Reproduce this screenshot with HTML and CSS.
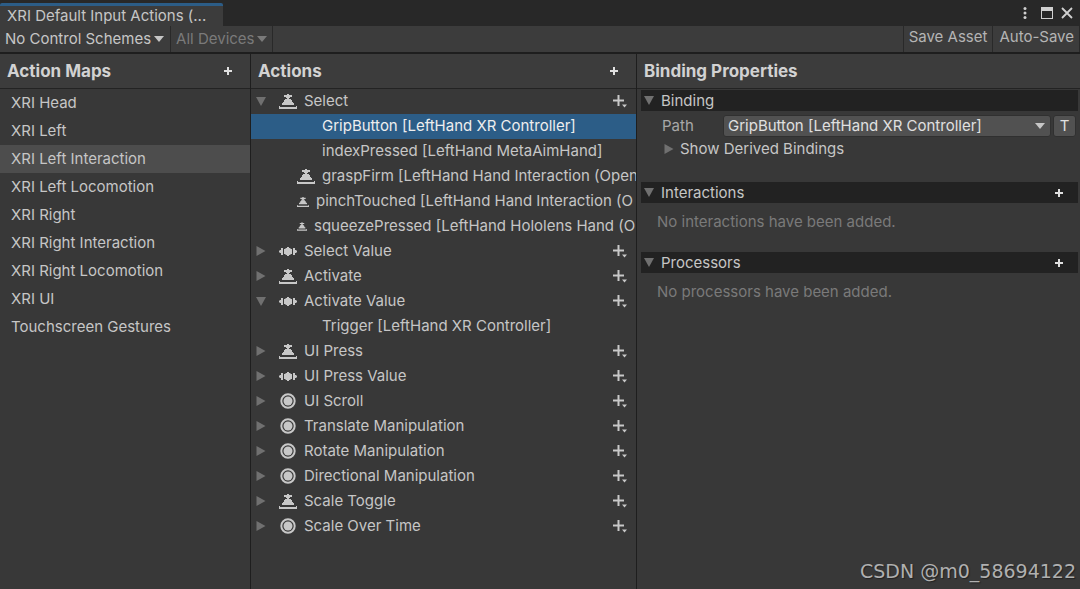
FILE: index.html
```html
<!DOCTYPE html>
<html lang="en">
<head>
<meta charset="utf-8">
<title>XRI Default Input Actions</title>
<link rel="stylesheet" href="styles.css">
</head>
<body>
<svg class="defs" aria-hidden="true">
  <symbol id="down" viewBox="0 0 10 9"><path d="M0 0h10L5 9z"/></symbol>
  <symbol id="right" viewBox="0 0 10 10"><path d="M0.500 0l9 5-9 5z"/></symbol>
  <symbol id="caret" viewBox="0 0 10 6"><path d="M0 0h10L5 6z"/></symbol>
  <symbol id="press" viewBox="0 0 18 15"><path d="M0 12h1v1h16v-1h1v3H0zM8 0h2v1h3v2h-2v1h-1v1h2v1h1v2h1v1h1v2H3V9h1V8h1V6h1V5h2V4H7V3H5V1h3z"/></symbol>
  <symbol id="axis" viewBox="0 0 18 9"><path d="M0 4l1-1h1V1h2v7H2V6H1L0 5zM18 4l-1-1h-1V1h-2v7h2V6h1l1-1zM7 1h1V0h2v1h1l1 1h1v5h-1l-1 1h-1v1H8V8H7L6 7H5V2h1z"/></symbol>
  <symbol id="ring" viewBox="0 0 18 18"><circle cx="9" cy="9" r="6.7" fill="none" stroke="currentColor" stroke-width="2"/><circle cx="9" cy="9" r="4.500"/></symbol>
  <symbol id="plus" viewBox="0 0 8 8"><path d="M3 0h2v3h3v2H5v3H3V5H0V3h3z"/></symbol>
  <symbol id="plusmenu" viewBox="0 0 15 13"><path d="M4.500 0h2v4.500H11v2H6.500V11h-2V6.500H0v-2h4.500zM9 9.500h5L11.500 12.500z"/></symbol>
</svg>
<div class="window">
  <header class="titlebar">
    <h1 class="tab">XRI Default Input Actions (...</h1>
    <div class="window-buttons">
      <button aria-label="Menu"><svg width="4" height="12" viewBox="0 0 4 12"><circle cx="2" cy="1.500" r="1.500"/><circle cx="2" cy="6" r="1.500"/><circle cx="2" cy="10.500" r="1.500"/></svg></button>
      <button aria-label="Maximize"><svg width="12" height="12" viewBox="0 0 12 12"><path fill-rule="evenodd" d="M0 0h12v12H0zM1 4v7h10V4z"/></svg></button>
      <button aria-label="Close"><svg width="12" height="12" viewBox="0 0 12 12"><path d="M1 1l10 10M11 1L1 11" fill="none" stroke="currentColor" stroke-width="1.800"/></svg></button>
    </div>
  </header>
  <nav class="toolbar">
    <button>No Control Schemes <svg width="10" height="6"><use href="#caret"/></svg></button>
    <button disabled>All Devices <svg width="10" height="6"><use href="#caret"/></svg></button>
    <span class="spacer"></span>
    <button class="save">Save Asset</button>
    <button class="save">Auto-Save</button>
  </nav>
  <main class="panes">
    <section class="pane">
      <header class="pane-head"><h2>Action Maps</h2><button class="add" aria-label="Add action map"><svg width="8" height="8"><use href="#plus"/></svg></button></header>
      <ul class="maps">
        <li><button>XRI Head</button></li>
        <li><button>XRI Left</button></li>
        <li><button class="current">XRI Left Interaction</button></li>
        <li><button>XRI Left Locomotion</button></li>
        <li><button>XRI Right</button></li>
        <li><button>XRI Right Interaction</button></li>
        <li><button>XRI Right Locomotion</button></li>
        <li><button>XRI UI</button></li>
        <li><button>Touchscreen Gestures</button></li>
      </ul>
    </section>
    <section class="pane">
      <header class="pane-head"><h2>Actions</h2><button class="add" aria-label="Add action"><svg width="8" height="8"><use href="#plus"/></svg></button></header>
      <ul class="tree">
        <li class="row"><button class="fold" aria-label="Collapse"><svg width="10" height="9"><use href="#down"/></svg></button><svg class="kind" width="18" height="15"><use href="#press"/></svg><span class="name">Select</span><button class="more" aria-label="Add binding"><svg width="15" height="13"><use href="#plusmenu"/></svg></button></li>
        <li class="row child bare selected"><span class="name">GripButton [LeftHand XR Controller]</span></li>
        <li class="row child bare"><span class="name">indexPressed [LeftHand MetaAimHand]</span></li>
        <li class="row child"><svg class="kind" width="18" height="15"><use href="#press"/></svg><span class="name">graspFirm [LeftHand Hand Interaction (Open</span></li>
        <li class="row child"><svg class="kind" width="12" height="10"><use href="#press"/></svg><span class="name">pinchTouched [LeftHand Hand Interaction (O</span></li>
        <li class="row child"><svg class="kind" width="10" height="9"><use href="#press"/></svg><span class="name">squeezePressed [LeftHand Hololens Hand (O</span></li>
        <li class="row"><button class="fold" aria-label="Expand"><svg width="10" height="10"><use href="#right"/></svg></button><svg class="kind" width="18" height="9"><use href="#axis"/></svg><span class="name">Select Value</span><button class="more" aria-label="Add binding"><svg width="15" height="13"><use href="#plusmenu"/></svg></button></li>
        <li class="row"><button class="fold" aria-label="Expand"><svg width="10" height="10"><use href="#right"/></svg></button><svg class="kind" width="18" height="15"><use href="#press"/></svg><span class="name">Activate</span><button class="more" aria-label="Add binding"><svg width="15" height="13"><use href="#plusmenu"/></svg></button></li>
        <li class="row"><button class="fold" aria-label="Collapse"><svg width="10" height="9"><use href="#down"/></svg></button><svg class="kind" width="18" height="9"><use href="#axis"/></svg><span class="name">Activate Value</span><button class="more" aria-label="Add binding"><svg width="15" height="13"><use href="#plusmenu"/></svg></button></li>
        <li class="row child bare"><span class="name">Trigger [LeftHand XR Controller]</span></li>
        <li class="row"><button class="fold" aria-label="Expand"><svg width="10" height="10"><use href="#right"/></svg></button><svg class="kind" width="18" height="15"><use href="#press"/></svg><span class="name">UI Press</span><button class="more" aria-label="Add binding"><svg width="15" height="13"><use href="#plusmenu"/></svg></button></li>
        <li class="row"><button class="fold" aria-label="Expand"><svg width="10" height="10"><use href="#right"/></svg></button><svg class="kind" width="18" height="9"><use href="#axis"/></svg><span class="name">UI Press Value</span><button class="more" aria-label="Add binding"><svg width="15" height="13"><use href="#plusmenu"/></svg></button></li>
        <li class="row"><button class="fold" aria-label="Expand"><svg width="10" height="10"><use href="#right"/></svg></button><svg class="kind" width="18" height="19"><use href="#ring" height="18"/></svg><span class="name">UI Scroll</span><button class="more" aria-label="Add binding"><svg width="15" height="13"><use href="#plusmenu"/></svg></button></li>
        <li class="row"><button class="fold" aria-label="Expand"><svg width="10" height="10"><use href="#right"/></svg></button><svg class="kind" width="18" height="19"><use href="#ring" height="18"/></svg><span class="name">Translate Manipulation</span><button class="more" aria-label="Add binding"><svg width="15" height="13"><use href="#plusmenu"/></svg></button></li>
        <li class="row"><button class="fold" aria-label="Expand"><svg width="10" height="10"><use href="#right"/></svg></button><svg class="kind" width="18" height="19"><use href="#ring" height="18"/></svg><span class="name">Rotate Manipulation</span><button class="more" aria-label="Add binding"><svg width="15" height="13"><use href="#plusmenu"/></svg></button></li>
        <li class="row"><button class="fold" aria-label="Expand"><svg width="10" height="10"><use href="#right"/></svg></button><svg class="kind" width="18" height="19"><use href="#ring" height="18"/></svg><span class="name">Directional Manipulation</span><button class="more" aria-label="Add binding"><svg width="15" height="13"><use href="#plusmenu"/></svg></button></li>
        <li class="row"><button class="fold" aria-label="Expand"><svg width="10" height="10"><use href="#right"/></svg></button><svg class="kind" width="18" height="15"><use href="#press"/></svg><span class="name">Scale Toggle</span><button class="more" aria-label="Add binding"><svg width="15" height="13"><use href="#plusmenu"/></svg></button></li>
        <li class="row"><button class="fold" aria-label="Expand"><svg width="10" height="10"><use href="#right"/></svg></button><svg class="kind" width="18" height="19"><use href="#ring" height="18"/></svg><span class="name">Scale Over Time</span><button class="more" aria-label="Add binding"><svg width="15" height="13"><use href="#plusmenu"/></svg></button></li>
      </ul>
    </section>
    <section class="pane">
      <header class="pane-head"><h2>Binding Properties</h2></header>
      <div class="properties">
        <section class="group">
          <div class="group-head"><button class="fold" aria-label="Collapse Binding"><svg width="10" height="9"><use href="#down"/></svg></button><h3>Binding</h3></div>
          <div class="field">
            <label for="path">Path</label>
            <div class="picker">
              <select id="path"><option>GripButton [LeftHand XR Controller]</option></select>
              <svg class="picker-caret" width="10" height="6"><use href="#caret"/></svg>
            </div>
            <button class="text-mode">T</button>
          </div>
          <button class="derived"><svg width="10" height="10"><use href="#right"/></svg>Show Derived Bindings</button>
        </section>
        <section class="group">
          <div class="group-head"><button class="fold" aria-label="Collapse Interactions"><svg width="10" height="9"><use href="#down"/></svg></button><h3>Interactions</h3><button class="add" aria-label="Add interaction"><svg width="8" height="8"><use href="#plus"/></svg></button></div>
          <p>No interactions have been added.</p>
        </section>
        <section class="group">
          <div class="group-head"><button class="fold" aria-label="Collapse Processors"><svg width="10" height="9"><use href="#down"/></svg></button><h3>Processors</h3><button class="add" aria-label="Add processor"><svg width="8" height="8"><use href="#plus"/></svg></button></div>
          <p>No processors have been added.</p>
        </section>
      </div>
    </section>
  </main>
  <div class="watermark">CSDN @m0_58694122</div>
</div>
</body>
</html>
```
FILE: styles.css
```css
* { box-sizing: border-box; }
body { margin: 0; background: #383838; color: #c6c6c6; font: 15px/20px Inter, sans-serif; }
h1, h2, h3, p, ul { margin: 0; padding: 0; font: inherit; list-style: none; }
button { margin: 0; padding: 0; border: 0; background: none; color: inherit; font: inherit; }
svg { display: block; flex: none; fill: currentColor; }
.defs { position: absolute; width: 0; height: 0; }
.window { position: relative; display: flex; flex-direction: column; min-height: 100vh; }

.titlebar { display: flex; justify-content: space-between; background: #282828; }
.tab { width: 223px; height: 23px; margin-top: 3px; padding: 0 7px; border-top: 3px solid #2c5d87; border-radius: 2px 2px 0 0; background: #3c3c3c; white-space: nowrap; }
.window-buttons { display: flex; align-items: center; gap: 8px; padding-right: 7px; color: #d0d0d0; }
.window-buttons button:first-child { margin-right: 6px; }

.toolbar { display: flex; height: 28px; background: #3c3c3c; border-bottom: 2px solid #1e1e1e; }
.toolbar button { display: flex; align-items: center; gap: 3px; padding: 0 6px 0 5px; border-right: 1px solid #292929; white-space: nowrap; }
.toolbar button:disabled { gap: 2px; padding-right: 5px; color: #7a7a7a; }
.toolbar .save { padding: 0 5px 4px; border-right: 0; border-left: 1px solid #292929; color: #b4b4b4; }
.toolbar .save + .save { padding-left: 6px; border-right: 1px solid #292929; }
.spacer { flex: 1; }

.panes { display: grid; flex: 1; grid-template-columns: 251px 386px 1fr; }
.pane { min-width: 0; border-right: 1px solid #1e1e1e; }
.pane:last-child { border-right: 0; }
.pane-head { display: flex; align-items: center; justify-content: space-between; height: 35px; padding: 0 18px 0 7px; background: #3c3c3c; border-bottom: 1px solid #232323; color: #d2d2d2; }
.pane-head h2 { font-size: 17px; font-weight: 700; }
.add { color: #e0e0e0; }

.maps button { display: block; width: 100%; height: 28px; padding: 0 11px; text-align: left; }
.maps .current { background: #4d4d4d; }

.row { display: flex; align-items: center; height: 25px; padding: 0 8px 0 5px; }
.fold { color: #707070; }
.row .fold { margin-right: 13px; padding-bottom: 1px; }
.row .kind { margin-right: 7px; color: #c8c8c8; }
.name { flex: 1; min-width: 0; padding-bottom: 2px; overflow: hidden; white-space: nowrap; }
.child { padding-left: 46px; padding-right: 0; }
.bare { padding-left: 71px; }
.selected { background: #2c5d87; color: #eeeeee; }
.more { color: #c8c8c8; }

.properties { display: grid; gap: 20px; padding: 1px 2px 0 4px; }
.group-head { display: flex; align-items: center; gap: 7px; height: 21px; padding: 0 15px 0 3px; background: #222222; }
.group-head h3 { flex: 1; }
.group p { padding: 9px 16px 0; color: #7a7a7a; }
.field { display: flex; align-items: center; gap: 2px; margin-top: 4px; padding-right: 2px; }
.field label { width: 80px; padding-left: 21px; color: #a8a8a8; }
.picker { position: relative; flex: 1; }
.picker select { display: block; width: 100%; height: 22px; padding: 0 24px 0 4px; border: 1px solid #303030; border-radius: 3px; background: #515151; color: #e0e0e0; font: inherit; line-height: 20px; appearance: none; }
.picker-caret { position: absolute; top: 8px; right: 6px; pointer-events: none; }
.text-mode { width: 23px; height: 22px; border: 1px solid #303030; border-radius: 3px; background: #515151; color: #e0e0e0; line-height: 20px; }
.derived { display: flex; align-items: center; gap: 6px; margin: 2px 0 3px; padding-left: 23px; }
.derived svg { color: #707070; }

.watermark { position: absolute; right: 4px; bottom: 4px; color: #b0b0b0; font: 19px/28px "DejaVu Sans", sans-serif; text-shadow: 1px 1px 1px #222222; }
```
